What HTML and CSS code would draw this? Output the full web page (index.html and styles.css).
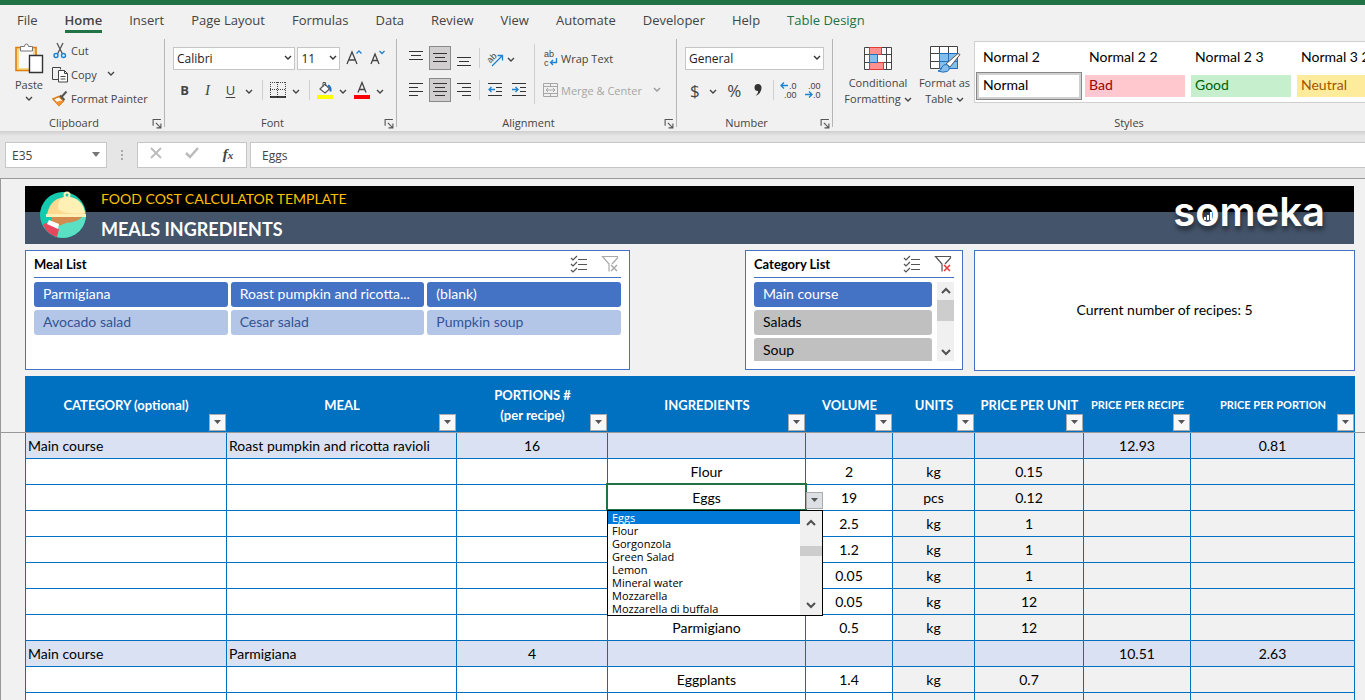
FILE: index.html
```html
<!DOCTYPE html>
<html lang="en">

<head>
    <meta charset="UTF-8">
    <meta name="viewport" content="width=device-width, initial-scale=1.0">
    <title>Food Cost Calculator</title>
    <link rel="stylesheet" href="styles.css">
</head>

<body>

    <!-- Icons that are used more than once -->
    <svg class="sprite" aria-hidden="true">
        <symbol id="chevron" viewBox="0 0 8 6"><path d="M1 1l3 3 3-3" fill="none" stroke="#444" stroke-width="1.4"/></symbol>
        <symbol id="launcher" viewBox="0 0 9 9"><path d="M1 6V.5h7M3.5 3.5l4 4M8 4v4H4" fill="none" stroke="#555"/></symbol>
        <symbol id="arrow" viewBox="0 0 9 5"><path d="M1 0h7L4.5 4z" fill="#555"/></symbol>
        <symbol id="up" viewBox="0 0 12 8"><path d="M2 6l4-4 4 4" fill="none" stroke="#505050" stroke-width="2"/></symbol>
        <symbol id="down" viewBox="0 0 12 8"><path d="M2 2l4 4 4-4" fill="none" stroke="#505050" stroke-width="2"/></symbol>
        <symbol id="checklist" viewBox="0 0 18 18"><path d="M1 3l2 2 4-4M1 9l2 2 4-4M1 15l2 2 4-4M8 4.5h9M8 9.5h9M8 14.5h9" fill="none" stroke="currentColor" stroke-width="1.2"/></symbol>
        <symbol id="funnel" viewBox="0 0 18 18"><path d="M8 16.5V9L1.500 1.500h15V3L11 9" fill="none" stroke="currentColor" stroke-width="1.2"/><path class="cross" d="M10 10l6 6M16 10l-6 6" fill="none" stroke-width="1.5"/></symbol>
    </svg>

    <nav class="tabs">
        <a href="#">File</a>
        <a href="#" class="active">Home</a>
        <a href="#">Insert</a>
        <a href="#">Page Layout</a>
        <a href="#">Formulas</a>
        <a href="#">Data</a>
        <a href="#">Review</a>
        <a href="#">View</a>
        <a href="#">Automate</a>
        <a href="#">Developer</a>
        <a href="#">Help</a>
        <a href="#" class="context">Table Design</a>
    </nav>

    <header class="ribbon">

        <section class="group clipboard">
            <div class="group-body">
                <button class="paste">
                    <svg width="30" height="32" viewBox="0 0 30 32">
                        <path d="M2 5.500h20v23H2z" fill="#fbd98a" stroke="#e07b12" stroke-width="1.600"/>
                        <path d="M5 8h14v18H5z" fill="#fafafa"/>
                        <path d="M6.500 9V4.500h4a2 2.500 0 0 1 4 0h4V9z" fill="#fff" stroke="#777"/>
                        <path d="M15.500 13.500h13v17h-13z" fill="#fff" stroke="#333" stroke-width="1.400"/>
                    </svg>
                    Paste
                    <svg class="chev"><use href="#chevron"/></svg>
                </button>
                <div class="clip-list">
                    <button>
                        <svg width="16" height="17" viewBox="0 0 16 17"><path d="M5 1l5.500 11M11 1L5.500 12" stroke="#555" stroke-width="1.300" fill="none"/><circle cx="4" cy="13.500" r="2" fill="none" stroke="#1e82d2" stroke-width="1.400"/><circle cx="11.500" cy="13.500" r="2" fill="none" stroke="#1e82d2" stroke-width="1.400"/></svg>
                        Cut
                    </button>
                    <button>
                        <svg width="16" height="17" viewBox="0 0 16 17"><path d="M6 13.500H.500V1.500h8v2" fill="none" stroke="#444"/><path d="M6.500 4.500h6l3 3v8.500h-9zM12.500 4.500v3h3M8.500 10.500h5M8.500 13h5" fill="#fff" stroke="#444"/></svg>
                        Copy
                        <svg class="chev"><use href="#chevron"/></svg>
                    </button>
                    <button>
                        <svg width="16" height="17" viewBox="0 0 16 17"><path d="M1 9l6-2.500 4.500 4.500L7 15.500z" fill="#fff" stroke="#e07b12" stroke-width="1.500"/><path d="M4 12l3 3.500 4-4-2-1z" fill="#f0922e"/><path d="M8 5.500l4.500 4.500M9.500 7l5-5.500" stroke="#555" stroke-width="2" fill="none"/></svg>
                        Format Painter
                    </button>
                </div>
            </div>
            <div class="group-name">Clipboard<button aria-label="Clipboard settings"><svg><use href="#launcher"/></svg></button></div>
        </section>

        <section class="group font">
            <div class="group-body">
                <div class="tool-row">
                    <select class="font-name" aria-label="Font"><option>Calibri</option></select>
                    <select class="font-size" aria-label="Font size"><option>11</option></select>
                    <button class="tool" aria-label="Increase font size"><svg width="18" height="18" viewBox="0 0 18 18"><path d="M2 15L7 3l5 12M3.500 11h7" fill="none" stroke="#444" stroke-width="1.300"/><path d="M11.500 4.500l2.500-2.500 2.500 2.500" fill="none" stroke="#1e82d2" stroke-width="1.300"/></svg></button>
                    <button class="tool" aria-label="Decrease font size"><svg width="18" height="18" viewBox="0 0 18 18"><path d="M3 15l4-10 4 10M4.500 11.500h5" fill="none" stroke="#444" stroke-width="1.300"/><path d="M11.500 2l2.500 2.500L16.500 2" fill="none" stroke="#1e82d2" stroke-width="1.300"/></svg></button>
                </div>
                <div class="tool-row">
                    <button class="tool bold">B</button>
                    <button class="tool italic">I</button>
                    <button class="tool underline">U</button>
                    <button class="drop" aria-label="Underline options"><svg class="chev"><use href="#chevron"/></svg></button>
                    <span class="sep"></span>
                    <button class="tool" aria-label="Borders"><svg width="16" height="16" viewBox="0 0 16 16"><path d="M0 .500h16M0 7.500h16M.500 0v15M7.500 0v15M15.500 0v15" stroke="#444" stroke-dasharray="1 1"/><path d="M0 15h16" stroke="#000" stroke-width="1.500"/></svg></button>
                    <button class="drop" aria-label="Border options"><svg class="chev"><use href="#chevron"/></svg></button>
                    <span class="sep"></span>
                    <button class="tool" aria-label="Fill color"><svg width="16" height="18" viewBox="0 0 16 18"><path d="M3 8l5-5 4.500 5L8 12z" fill="#fff" stroke="#555" stroke-width="1.200"/><path d="M6 6V1.500h2.500V5" fill="none" stroke="#555"/><path d="M11 4.500q3 1 2.500 6" fill="none" stroke="#1e6fbd" stroke-width="2"/><path d="M0 14h16v4H0z" fill="#ff0"/></svg></button>
                    <button class="drop" aria-label="Fill options"><svg class="chev"><use href="#chevron"/></svg></button>
                    <button class="tool" aria-label="Font color"><svg width="16" height="18" viewBox="0 0 16 18"><path d="M4 11.500L8 1.500l4 10M5.300 8.500h5.400" fill="none" stroke="#444" stroke-width="1.300"/><path d="M0 14h16v4H0z" fill="#f00"/></svg></button>
                    <button class="drop" aria-label="Font color options"><svg class="chev"><use href="#chevron"/></svg></button>
                </div>
            </div>
            <div class="group-name">Font<button aria-label="Font settings"><svg><use href="#launcher"/></svg></button></div>
        </section>

        <section class="group alignment">
            <div class="group-body">
                <div class="align-tools">
                    <div class="tool-row">
                        <button class="tool" aria-label="Top align"><svg width="14" height="16" viewBox="0 0 14 16"><path d="M0 1.500h14M2 5.500h10M0 9.500h14" stroke="#333"/></svg></button>
                        <button class="tool pressed" aria-label="Middle align"><svg width="14" height="16" viewBox="0 0 14 16"><path d="M0 3.500h14M2 7.500h10M0 11.500h14" stroke="#333"/></svg></button>
                        <button class="tool" aria-label="Bottom align"><svg width="14" height="16" viewBox="0 0 14 16"><path d="M0 7.500h14M2 11.500h10M0 15.500h14" stroke="#333"/></svg></button>
                        <span class="sep"></span>
                        <button class="tool" aria-label="Orientation"><svg width="17" height="17" viewBox="0 0 17 17"><text x="1" y="12" transform="rotate(-45 4 10)" class="icon-text">ab</text><path d="M5 16L15 6M10.500 5.500h5v5" fill="none" stroke="#1e82d2" stroke-width="1.300"/></svg></button>
                        <button class="drop" aria-label="Orientation options"><svg class="chev"><use href="#chevron"/></svg></button>
                    </div>
                    <div class="tool-row">
                        <button class="tool" aria-label="Align left"><svg width="14" height="16" viewBox="0 0 14 16"><path d="M0 1.500h14M0 5.500h9M0 9.500h14M0 13.500h9" stroke="#333"/></svg></button>
                        <button class="tool pressed" aria-label="Center"><svg width="14" height="16" viewBox="0 0 14 16"><path d="M0 1.500h14M2 5.500h10M0 9.500h14M2 13.500h10" stroke="#333"/></svg></button>
                        <button class="tool" aria-label="Align right"><svg width="14" height="16" viewBox="0 0 14 16"><path d="M0 1.500h14M5 5.500h9M0 9.500h14M5 13.500h9" stroke="#333"/></svg></button>
                        <span class="sep"></span>
                        <button class="tool" aria-label="Decrease indent"><svg width="15" height="16" viewBox="0 0 15 16"><path d="M0 1.500h14M8 5.500h6M8 9.500h6M0 13.500h14" stroke="#333"/><path d="M7 7.500H1M3.500 5L1 7.500 3.500 10" fill="none" stroke="#1e82d2" stroke-width="1.300"/></svg></button>
                        <button class="tool" aria-label="Increase indent"><svg width="15" height="16" viewBox="0 0 15 16"><path d="M0 1.500h14M8 5.500h6M8 9.500h6M0 13.500h14" stroke="#333"/><path d="M0 7.500h6M3.500 5L6 7.500 3.500 10" fill="none" stroke="#1e82d2" stroke-width="1.300"/></svg></button>
                    </div>
                </div>
                <div class="wrap-tools">
                    <button>
                        <svg width="15" height="18" viewBox="0 0 15 18"><text x="1" y="8" class="icon-text">ab</text><text x="1" y="17" class="icon-text">c</text><path d="M13.500 9v4.500H7.500M10 11l-2.500 2.500L10 16" fill="none" stroke="#1e82d2" stroke-width="1.300"/></svg>
                        Wrap Text
                    </button>
                    <button disabled>
                        <svg width="15" height="16" viewBox="0 0 15 16"><path d="M.500 1.500h14v13H.500zM.500 4.500h14M.500 11.500h14M7.500 1.500v3M7.500 11.500v3M3 8h9M5 6L3 8l2 2M10 6l2 2-2 2" fill="none" stroke="#a6a6a6"/></svg>
                        Merge &amp; Center
                        <svg class="chev"><use href="#chevron"/></svg>
                    </button>
                </div>
            </div>
            <div class="group-name">Alignment<button aria-label="Alignment settings"><svg><use href="#launcher"/></svg></button></div>
        </section>

        <section class="group number">
            <div class="group-body">
                <div class="tool-row">
                    <select class="number-format" aria-label="Number format"><option>General</option></select>
                </div>
                <div class="tool-row number-tools">
                    <button class="tool symbol">$</button>
                    <button class="drop" aria-label="Currency options"><svg class="chev"><use href="#chevron"/></svg></button>
                    <button class="tool symbol">%</button>
                    <button class="tool" aria-label="Comma style"><svg width="10" height="14" viewBox="0 0 10 14"><path d="M5 1a3.500 3.500 0 0 1 3.500 4Q8.500 10 2.500 13q3-3 2.500-5a3.500 3.500 0 0 1 0-7z" fill="#333"/></svg></button>
                    <span class="sep"></span>
                    <button class="tool" aria-label="Increase decimal"><svg width="17" height="18" viewBox="0 0 17 18"><path d="M8 4.500H1M4 1.500l-3 3 3 3" fill="none" stroke="#1e82d2" stroke-width="1.300"/><text x="9" y="8" class="icon-text">.0</text><text x="4" y="17" class="icon-text">.00</text></svg></button>
                    <button class="tool" aria-label="Decrease decimal"><svg width="17" height="18" viewBox="0 0 17 18"><path d="M1 13.500h7M5 10.500l3 3-3 3" fill="none" stroke="#1e82d2" stroke-width="1.300"/><text x="4" y="8" class="icon-text">.00</text><text x="9" y="17" class="icon-text">.0</text></svg></button>
                </div>
            </div>
            <div class="group-name">Number<button aria-label="Number settings"><svg><use href="#launcher"/></svg></button></div>
        </section>

        <section class="group styles">
            <div class="group-body">
                <button class="big conditional">
                    <svg width="30" height="26" viewBox="0 0 30 26">
                        <path d="M1.500 1.500h27v22h-27zM1.500 8.500h27M1.500 16.500h27M6.500 1.500v22M23.500 1.500v22" fill="#fff" stroke="#444"/>
                        <path d="M6.500 1.500h12v7h-12zM6.500 16.500h14v7h-14z" fill="#ff9090" stroke="#e03c31"/>
                        <path d="M6.500 8.500h8v8h-8z" fill="#83beec" stroke="#1e6fbd"/>
                    </svg>
                    <span>Conditional<br>Formatting <svg class="chev"><use href="#chevron"/></svg></span>
                </button>
                <button class="big format-table">
                    <svg width="32" height="28" viewBox="0 0 32 28">
                        <path d="M1.500 1.500h27v22h-27zM1.500 8.500h27M1.500 16.500h27M10.500 1.500v22M19.500 1.500v22" fill="#fff" stroke="#444"/>
                        <path d="M10.500 8.500h18v15h-18zM10.500 16.500h18M19.500 8.500v15" fill="#83beec" stroke="#1e6fbd"/>
                        <path d="M17 19L29 8.500l2 1L21 22z" fill="#fff" stroke="#555"/>
                        <path d="M9 26q3 0 4-4 3-4 6-1.500 3 4-1 6-4 1.500-9-.500z" fill="#83beec" stroke="#1e6fbd"/>
                    </svg>
                    <span>Format as<br>Table <svg class="chev"><use href="#chevron"/></svg></span>
                </button>
                <div class="gallery">
                    <button>Normal 2</button>
                    <button>Normal 2 2</button>
                    <button>Normal 2 3</button>
                    <button>Normal 3 2</button>
                    <button class="selected">Normal</button>
                    <button class="bad">Bad</button>
                    <button class="good">Good</button>
                    <button class="neutral">Neutral</button>
                </div>
            </div>
            <div class="group-name">Styles</div>
        </section>

    </header>

    <div class="formula-bar">
        <select class="name-box" aria-label="Name box"><option>E35</option></select>
        <svg class="dots" width="4" height="12" viewBox="0 0 4 12"><path d="M1 1h2v2H1zM1 5h2v2H1zM1 9h2v2H1z" fill="#aaa"/></svg>
        <div class="formula-buttons">
            <button aria-label="Cancel"><svg width="12" height="12" viewBox="0 0 12 12"><path d="M1 1l10 10M11 1L1 11" stroke="#bbb" stroke-width="1.800"/></svg></button>
            <button aria-label="Enter"><svg width="14" height="12" viewBox="0 0 14 12"><path d="M1 6l4 4 8-9" fill="none" stroke="#bbb" stroke-width="2.500"/></svg></button>
            <button class="fx" aria-label="Insert function">f<small>x</small></button>
        </div>
        <input class="formula" type="text" value="Eggs" aria-label="Formula">
    </div>

    <main class="sheet">

        <div class="banner">
            <svg class="chef" width="46" height="48" viewBox="0 0 46 48">
                <circle cx="23" cy="24" r="23" fill="#14cbb0"/>
                <path d="M18 33L46 25a23 23 0 0 1-32 20z" fill="#5ce0c4"/>
                <path d="M12 26h30q-4 5-16 6l-7 3-8-5z" fill="#d48c4e"/>
                <path d="M3 33l4-1 12 6-2 8Q6 43 3 33z" fill="#e8455f"/>
                <path d="M9 29l10 4-1 5-11-5z" fill="#fff"/>
                <path d="M7 24C9 12 16 6 27 6s17 7 18 18z" fill="#ffd98f"/>
                <path d="M18 18C17 9 22 6 27 6c11 0 17 7 18 16q-20 2-27-4z" fill="#fff0b5"/>
                <circle cx="27" cy="4" r="2.500" fill="none" stroke="#fff0b5" stroke-width="2"/>
                <path d="M6 23h40v3H6z" fill="#fff0b5"/>
            </svg>
            <div class="titles">
                <p>FOOD COST CALCULATOR TEMPLATE</p>
                <h1>MEALS INGREDIENTS</h1>
            </div>
            <div class="brand">s<span class="brand-o">o<svg width="10" height="10" viewBox="0 0 10 10"><path d="M1 6h2v3H1zM4 4h2v5H4zM7 1h2v8H7z" fill="#fff"/></svg></span>meka</div>
        </div>

        <div class="slicers">
            <section class="slicer meals">
                <div class="slicer-head">
                    <h2>Meal List</h2>
                    <button aria-label="Multi-select"><svg width="18" height="18"><use href="#checklist"/></svg></button>
                    <button class="muted" aria-label="Clear filter"><svg width="18" height="18"><use href="#funnel"/></svg></button>
                </div>
                <div class="slicer-items">
                    <button class="on">Parmigiana</button>
                    <button class="on">Roast pumpkin and ricotta...</button>
                    <button class="on">(blank)</button>
                    <button>Avocado salad</button>
                    <button>Cesar salad</button>
                    <button>Pumpkin soup</button>
                </div>
            </section>

            <section class="slicer categories">
                <div class="slicer-head">
                    <h2>Category List</h2>
                    <button aria-label="Multi-select"><svg width="18" height="18"><use href="#checklist"/></svg></button>
                    <button class="clear" aria-label="Clear filter"><svg width="18" height="18"><use href="#funnel"/></svg></button>
                </div>
                <div class="slicer-scroll">
                    <div class="slicer-items">
                        <button class="on">Main course</button>
                        <button>Salads</button>
                        <button>Soup</button>
                    </div>
                    <div class="scrollbar">
                        <svg width="12" height="8"><use href="#up"/></svg>
                        <span class="thumb"></span>
                        <svg width="12" height="8"><use href="#down"/></svg>
                    </div>
                </div>
            </section>

            <p class="recipe-count">Current number of recipes: 5</p>
        </div>

        <div class="table-wrap">
            <table>
                <colgroup>
                    <col class="c-category"><col class="c-meal"><col class="c-portions"><col class="c-ingredients"><col class="c-volume"><col class="c-units"><col class="c-unit-price"><col class="c-recipe-price"><col class="c-portion-price">
                </colgroup>
                <thead>
                    <tr>
                        <th>CATEGORY (optional)<button aria-label="Filter category"><svg><use href="#arrow"/></svg></button></th>
                        <th>MEAL<button aria-label="Filter meal"><svg><use href="#arrow"/></svg></button></th>
                        <th>PORTIONS #<br>(per recipe)<button aria-label="Filter portions"><svg><use href="#arrow"/></svg></button></th>
                        <th>INGREDIENTS<button aria-label="Filter ingredients"><svg><use href="#arrow"/></svg></button></th>
                        <th>VOLUME<button aria-label="Filter volume"><svg><use href="#arrow"/></svg></button></th>
                        <th>UNITS<button aria-label="Filter units"><svg><use href="#arrow"/></svg></button></th>
                        <th>PRICE PER UNIT<button aria-label="Filter unit price"><svg><use href="#arrow"/></svg></button></th>
                        <th class="small">PRICE PER RECIPE<button aria-label="Filter recipe price"><svg><use href="#arrow"/></svg></button></th>
                        <th class="small">PRICE PER PORTION<button aria-label="Filter portion price"><svg><use href="#arrow"/></svg></button></th>
                    </tr>
                </thead>
                <tbody>
                    <tr class="meal"><td>Main course</td><td>Roast pumpkin and ricotta ravioli</td><td>16</td><td></td><td></td><td></td><td></td><td>12.93</td><td>0.81</td></tr>
                    <tr><td></td><td></td><td></td><td>Flour</td><td>2</td><td>kg</td><td>0.15</td><td></td><td></td></tr>
                    <tr>
                        <td></td><td></td><td></td>
                        <td class="current">
                            Eggs
                            <button class="pick" aria-label="Choose ingredient"><svg><use href="#arrow"/></svg></button>
                            <div class="dropdown">
                                <ul role="listbox" aria-label="Ingredients">
                                    <li role="option" aria-selected="true">Eggs</li>
                                    <li role="option">Flour</li>
                                    <li role="option">Gorgonzola</li>
                                    <li role="option">Green Salad</li>
                                    <li role="option">Lemon</li>
                                    <li role="option">Mineral water</li>
                                    <li role="option">Mozzarella</li>
                                    <li role="option">Mozzarella di buffala</li>
                                </ul>
                                <div class="scrollbar">
                                    <svg width="12" height="8"><use href="#up"/></svg>
                                    <span class="thumb"></span>
                                    <svg width="12" height="8"><use href="#down"/></svg>
                                </div>
                            </div>
                        </td>
                        <td>19</td><td>pcs</td><td>0.12</td><td></td><td></td>
                    </tr>
                    <tr><td></td><td></td><td></td><td></td><td>2.5</td><td>kg</td><td>1</td><td></td><td></td></tr>
                    <tr><td></td><td></td><td></td><td></td><td>1.2</td><td>kg</td><td>1</td><td></td><td></td></tr>
                    <tr><td></td><td></td><td></td><td></td><td>0.05</td><td>kg</td><td>1</td><td></td><td></td></tr>
                    <tr><td></td><td></td><td></td><td></td><td>0.05</td><td>kg</td><td>12</td><td></td><td></td></tr>
                    <tr><td></td><td></td><td></td><td>Parmigiano</td><td>0.5</td><td>kg</td><td>12</td><td></td><td></td></tr>
                    <tr class="meal"><td>Main course</td><td>Parmigiana</td><td>4</td><td></td><td></td><td></td><td></td><td>10.51</td><td>2.63</td></tr>
                    <tr><td></td><td></td><td></td><td>Eggplants</td><td>1.4</td><td>kg</td><td>0.7</td><td></td><td></td></tr>
                    <tr><td></td><td></td><td></td><td></td><td></td><td></td><td></td><td></td><td></td></tr>
                </tbody>
            </table>
        </div>

    </main>

</body>

</html>
```

FILE: styles.css
```css
:root {
    --green: #217346;
    --ribbon: #f1f1f1;
    --text: #444;
    --line: #c6c6c6;
    --blue: #0070c0;
    --slicer: #4472c4;
    --ui: "Open Sans", "Noto Sans", sans-serif;
    --cell: Lato, "Open Sans", sans-serif;
}

* {
    margin: 0;
    padding: 0;
    box-sizing: border-box;
}

body {
    display: flex;
    flex-direction: column;
    height: 100vh;
    overflow: hidden;
    border-top: 5px solid var(--green);
    background: #e6e6e6;
    color: var(--text);
    font-family: var(--ui);
    font-size: 12px;
}

button, select, input {
    appearance: none;
    border: none;
    border-radius: 0;
    background: none;
    color: inherit;
    font: inherit;
}

svg {
    flex: none;
    overflow: visible;
}

.sprite {
    position: absolute;
    width: 0;
    height: 0;
}

.chev {
    width: 8px;
    height: 6px;
}

.icon-text {
    font-family: "Liberation Sans", sans-serif;
    font-size: 9px;
    fill: #444;
}

/* Tabs */

.tabs {
    display: flex;
    flex: none;
    gap: 27px;
    height: 32px;
    padding: 4px 17px 0;
    background: var(--ribbon);
    font-size: 13px;
}

.tabs a {
    height: 24px;
    line-height: 23px;
    color: var(--text);
    text-decoration: none;
    white-space: nowrap;
}

.tabs .active {
    border-bottom: 3px solid var(--green);
    font-weight: 600;
}

.tabs .context {
    color: var(--green);
}

/* Ribbon */

.ribbon {
    display: flex;
    flex: none;
    height: 94px;
    padding-top: 2px;
    overflow: hidden;
    background: var(--ribbon);
    font-size: 11px;
}

.group {
    display: flex;
    flex: none;
    flex-direction: column;
    height: 88px;
    border-right: 1px solid #b5b5b5;
}

.group-body {
    flex: 1;
    padding: 6px 8px 0;
}

.group-name {
    position: relative;
    height: 12px;
    line-height: 16px;
    text-align: center;
}

.group-name button {
    position: absolute;
    top: 4px;
    right: 2px;
    width: 10px;
    height: 10px;
}

.group-name svg {
    display: block;
    width: 10px;
    height: 10px;
}

.group.clipboard {
    width: 165px;
}

.clipboard .group-name, .font .group-name, .alignment .group-name, .number .group-name {
    padding-right: 16px;
}

.clipboard .group-body {
    display: flex;
    gap: 6px;
    padding: 0 0 0 12px;
}

.paste {
    display: flex;
    flex-direction: column;
    align-items: center;
    align-self: flex-start;
    gap: 3px;
    width: 34px;
    padding-top: 3px;
    line-height: 16px;
}

.clip-list button {
    display: flex;
    align-items: center;
    gap: 3px;
    height: 24px;
    padding-bottom: 2px;
    white-space: nowrap;
}

.clip-list .chev {
    margin-left: 7px;
}

.group.font {
    width: 232px;
}

.tool-row {
    display: flex;
    align-items: center;
    height: 24px;
    margin: 2px 0 8px;
}

.font .group-body, .alignment .group-body, .number .group-body {
    padding-top: 5px;
}

.tool {
    display: flex;
    align-items: center;
    justify-content: center;
    width: 24px;
    height: 24px;
}

.font .tool {
    width: 23px;
}

.drop {
    width: 12px;
    height: 24px;
}

.font .drop {
    width: 14px;
}

.alignment .drop {
    width: 8px;
}

.bold {
    font-size: 13px;
    font-weight: 700;
}

.italic {
    font-family: "Liberation Serif", serif;
    font-size: 15px;
    font-style: italic;
}

.underline {
    font-size: 13px;
    text-decoration: underline;
    text-underline-offset: 2px;
}

.sep {
    width: 1px;
    height: 20px;
    margin: 0 3px;
    background: #d0d0d0;
}

.font .sep {
    margin-left: 6px;
}

.ribbon select {
    height: 23px;
    padding: 0 3px;
    border: 1px solid var(--line);
    background: #fff url("data:image/svg+xml,%3Csvg xmlns='http://www.w3.org/2000/svg' width='8' height='6'%3E%3Cpath d='M1 1l3 3 3-3' fill='none' stroke='%23333' stroke-width='1.4'/%3E%3C/svg%3E") no-repeat right 2px center;
    color: #222;
    font-size: 12px;
}

.font-name {
    width: 123px;
    margin-right: 2px;
}

.font-size {
    width: 43px;
    margin-right: 2px;
}

.number-format {
    width: 140px;
}

.group.alignment {
    width: 280px;
}

.alignment .group-body {
    display: flex;
    gap: 8px;
    padding-left: 7px;
}

.align-tools {
    padding-right: 3px;
    border-right: 1px solid #d0d0d0;
    height: 60px;
}

.align-tools .tool {
    border: 1px solid transparent;
}

.align-tools .pressed {
    width: 22px;
    margin: 0 1px;
    border-color: #8a8a8a;
    background: #d0cece;
}

.wrap-tools button {
    display: flex;
    align-items: center;
    gap: 3px;
    height: 24px;
    margin: 2px 0 8px;
    white-space: nowrap;
}

.wrap-tools button:disabled {
    color: #a6a6a6;
}

.wrap-tools button:disabled .chev {
    margin-left: 8px;
    opacity: 0.5;
}

.group.number {
    width: 156px;
}

.number-tools {
    margin-left: -2px;
}

.number-tools .drop {
    margin-right: 4px;
}

.number .symbol {
    font-size: 17px;
}

.group.styles {
    width: 592px;
    border-right: none;
}

.styles .group-body {
    display: flex;
    padding: 2px 0 0 8px;
}

.big {
    display: flex;
    flex-direction: column;
    align-items: center;
    gap: 2px;
    padding-top: 4px;
    line-height: 16px;
    white-space: nowrap;
}

.big > svg {
    height: 28px;
}

.conditional {
    width: 74px;
}

.format-table {
    width: 59px;
}

.gallery {
    display: grid;
    grid-template-columns: repeat(4, 100px);
    grid-auto-rows: 22px;
    gap: 6px;
    height: 62px;
    padding: 5px 4px;
    border: 1px solid #d0d0d0;
    background: #fff;
    color: #000;
    font-family: var(--cell);
    font-size: 14px;
}

.gallery button {
    padding: 0 0 3px 4px;
    text-align: left;
}

.gallery .selected {
    outline: 1px solid #888;
    outline-offset: 2px;
    box-shadow: 0 0 0 2px #d0d0d0;
}

.gallery .bad {
    background: #ffc7ce;
    color: #9c0006;
}

.gallery .good {
    background: #c6efce;
    color: #006100;
}

.gallery .neutral {
    background: #ffeb9c;
    color: #9c5700;
}

/* Formula bar */

.formula-bar {
    display: flex;
    flex: none;
    align-items: center;
    height: 47px;
    padding-left: 5px;
    background: linear-gradient(#cfcfcf, #e6e6e6 5px);
}

.formula-bar > select, .formula-bar > input, .formula-buttons {
    height: 26px;
    border: 1px solid var(--line);
    background-color: #fff;
}

.formula-bar > .name-box {
    width: 102px;
    padding: 1px 6px 0;
    background: #fff url("data:image/svg+xml,%3Csvg xmlns='http://www.w3.org/2000/svg' width='8' height='5'%3E%3Cpath d='M0 0h8L4 5z' fill='%23777'/%3E%3C/svg%3E") no-repeat right 6px center;
}

.dots {
    margin: 0 13px;
}

.formula-buttons {
    display: flex;
    width: 110px;
}

.formula-buttons button {
    flex: 1;
}

.formula-buttons .fx {
    font-family: "Liberation Serif", serif;
    font-size: 15px;
    font-style: italic;
    font-weight: 700;
    line-height: 20px;
}

.fx small {
    font-size: 11px;
}

.formula {
    flex: 1;
    margin-left: 3px;
    padding: 1px 11px 0;
}

.formula-bar > .formula {
    border-right: none;
}

/* Sheet */

.sheet {
    flex: 1;
    min-height: 0;
    overflow: hidden;
    padding: 7px 10px 0 24px;
    border-top: 1px solid #999;
    border-left: 1px solid #999;
    background: #f1f1f1;
    color: #000;
    font-family: var(--cell);
    font-size: 14px;
}

.banner {
    display: flex;
    align-items: center;
    height: 58px;
    margin-right: 1px;
    padding: 0 29px 0 15px;
    background: linear-gradient(#000 26px, #44546a 26px);
}

.titles {
    flex: 1;
    padding-left: 15px;
    color: #fff;
}

.titles p {
    color: #ffc000;
    line-height: 26px;
}

.titles h1 {
    padding-top: 2px;
    font-size: 18px;
    line-height: 30px;
}

.brand {
    padding-bottom: 6px;
    color: #fff;
    font-family: Inter, sans-serif;
    font-size: 40px;
    font-weight: 600;
    line-height: 50px;
    text-shadow: 1px 4px 5px rgba(0, 0, 0, 0.5);
}

.brand-o {
    position: relative;
}

.brand-o svg {
    position: absolute;
    left: 8px;
    bottom: 15px;
}

/* Slicers */

.slicers {
    display: flex;
    margin: 6px 0 5px;
}

.slicer, .recipe-count {
    height: 120px;
    border: 1px solid var(--slicer);
    background: #fff;
}

.slicer {
    padding: 0 8px;
}

.meals {
    flex: 1 1 605px;
    margin-right: 115px;
}

.categories {
    flex: none;
    width: 218px;
    margin-right: 11px;
}

.recipe-count {
    flex: 1 1 381px;
    height: 121px;
    line-height: 118px;
    text-align: center;
}

.slicer-head {
    display: flex;
    align-items: center;
    gap: 13px;
    height: 27px;
    margin-bottom: 4px;
    padding-right: 2px;
    border-bottom: 1px solid var(--slicer);
    color: #555;
}

.slicer-head h2 {
    flex: 1;
    padding-bottom: 1px;
    color: #000;
    font-size: 13px;
}

.slicer-head button {
    height: 18px;
}

.slicer-head .muted {
    color: #aaa;
}

.cross {
    stroke: var(--cross, #aaa);
}

.clear {
    --cross: #e8383b;
}

.slicer-items {
    display: grid;
    flex: 1;
    grid-template-columns: repeat(3, 1fr);
    gap: 3px;
}

.slicer-items button {
    height: 25px;
    padding: 0 9px 2px;
    border-radius: 3px;
    background: #b4c6e7;
    color: #305496;
    text-align: left;
    white-space: nowrap;
}

.slicer-scroll {
    display: flex;
    gap: 5px;
    height: 79px;
    overflow: hidden;
}

.categories .slicer-items {
    grid-template-columns: 1fr;
}

.categories .slicer-items button {
    background: #c0c0c0;
    color: #000;
}

.slicer-items .on, .categories .slicer-items .on {
    background: var(--slicer);
    color: #fff;
}

.scrollbar {
    display: flex;
    flex-direction: column;
    align-items: center;
    width: 17px;
    padding: 5px 0;
    background: #f0f0f0;
}

.scrollbar .thumb {
    width: 100%;
    height: 21px;
    margin: 5px 0 auto;
    background: #cdcdcd;
}

/* Table */

.table-wrap {
    position: relative;
    margin: 0 -10px 0 -24px;
    padding: 0 10px 0 24px;
}

/* Freeze line runs over the whole sheet */
.table-wrap::after {
    content: "";
    position: absolute;
    top: 56px;
    left: 0;
    right: 0;
    height: 1px;
    background: #999;
}

table {
    width: 100%;
    table-layout: fixed;
    border-spacing: 0;
}

.c-category { width: 202px; }
.c-meal { width: 230px; }
.c-portions { width: 151px; }
.c-ingredients { width: 198px; }
.c-volume { width: 87px; }
.c-units { width: 82px; }
.c-unit-price { width: 109px; }
.c-recipe-price { width: 107px; }
.c-portion-price { width: 164px; }

th {
    position: relative;
    height: 57px;
    padding-top: 1px;
    background: var(--blue);
    color: #fff;
    font-size: 13px;
    line-height: 20px;
    white-space: nowrap;
}

th.small {
    font-size: 11px;
}

th button, .pick {
    position: absolute;
    right: 1px;
    bottom: 2px;
    display: flex;
    align-items: center;
    justify-content: center;
    width: 17px;
    height: 17px;
    border: 1px solid #ababab;
    background: #f8f8f8;
}

th button svg, .pick svg {
    width: 9px;
    height: 5px;
}

td {
    height: 26px;
    border-right: 1px solid var(--blue);
    border-bottom: 1px solid var(--blue);
    background: #fff;
    line-height: 20px;
    text-align: center;
    white-space: nowrap;
}

td:nth-child(-n+2) {
    padding-left: 2px;
    text-align: left;
}

td:first-child {
    border-left: 1px solid var(--blue);
}

td:nth-child(n+6) {
    background: #f1f1f1;
}

.meal td, .meal td:nth-child(n+6) {
    background: #d9e1f2;
}

.current {
    position: relative;
}

.current::before {
    content: "";
    position: absolute;
    inset: -2px -2px -1px -2px;
    border: 2px solid var(--green);
}

.pick {
    right: -18px;
    bottom: 1px;
    background: #dcdfe4;
}

.dropdown {
    position: absolute;
    z-index: 1;
    top: 25px;
    left: -1px;
    display: flex;
    width: 216px;
    height: 106px;
    border: 1px solid #000;
    background: #fff;
    color: #000;
    font-family: var(--ui);
    font-size: 11px;
    line-height: 13px;
    text-align: left;
}

.dropdown ul {
    flex: 1;
    list-style: none;
}

.dropdown li {
    padding-left: 4px;
}

.dropdown [aria-selected="true"] {
    background: #0078d7;
    color: #fff;
}

.dropdown .scrollbar {
    width: 22px;
    padding: 8px 0 6px;
}

.dropdown .thumb {
    height: 10px;
    margin-top: 19px;
}
```
